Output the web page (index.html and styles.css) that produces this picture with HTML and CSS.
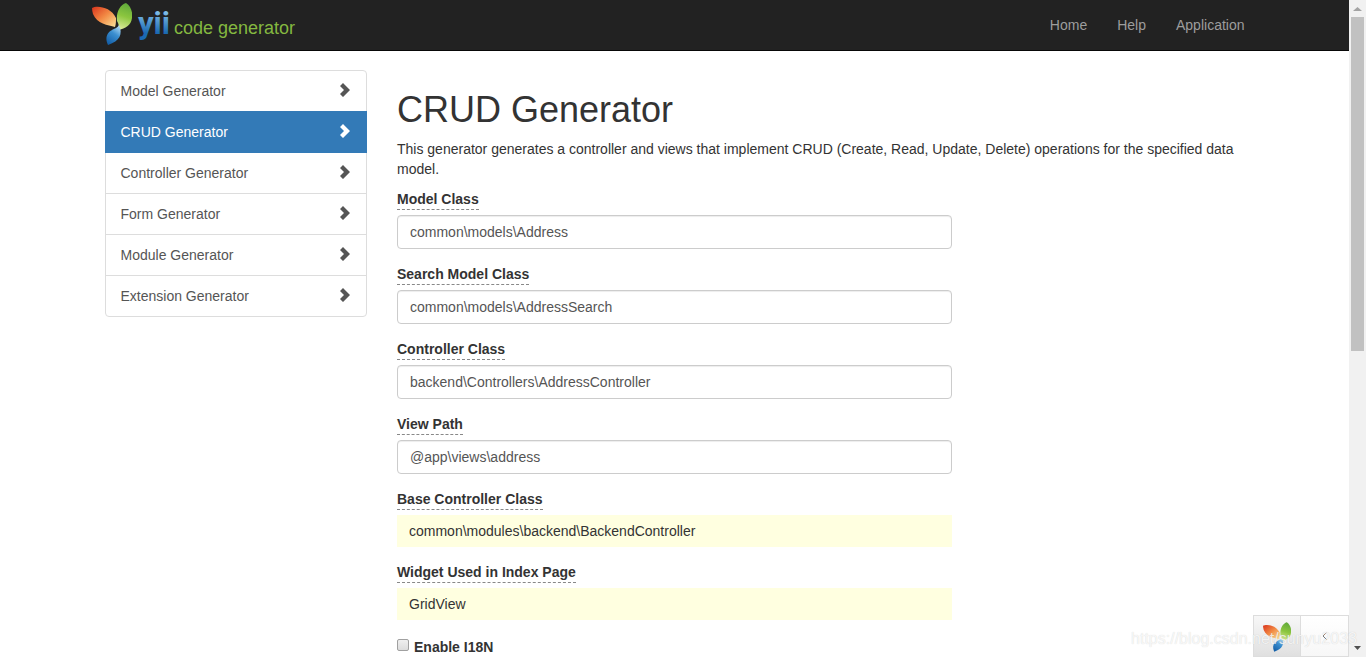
FILE: index.html
```
<!DOCTYPE html>
<html lang="en">
<head>
<meta charset="utf-8">
<title>CRUD Generator</title>
<link rel="stylesheet" href="styles.css">
</head>
<body>
<svg class="defs" aria-hidden="true">
  <defs>
    <linearGradient id="red" x1="0" y1="0" x2="1" y2="1"><stop offset="0" stop-color="#d9331c"/><stop offset=".5" stop-color="#f28b45"/><stop offset="1" stop-color="#fbe39a"/></linearGradient>
    <linearGradient id="green" x1=".6" y1="0" x2=".4" y2="1"><stop offset="0" stop-color="#5fa83a"/><stop offset=".5" stop-color="#8cc63f"/><stop offset="1" stop-color="#dcea9a"/></linearGradient>
    <linearGradient id="blue" x1=".8" y1="0" x2=".3" y2="1"><stop offset="0" stop-color="#b5dcf4"/><stop offset=".45" stop-color="#3b8fd0"/><stop offset="1" stop-color="#1560a8"/></linearGradient>
    <linearGradient id="word" x1="0" y1="0" x2="0" y2="1"><stop offset=".2" stop-color="#7dbbe8"/><stop offset=".75" stop-color="#1b6ab2"/></linearGradient>
    <symbol id="mark" viewBox="0 0 40 42">
      <path fill="url(#red)" d="M0 5C5 2 19 4 24 15C24 18 24 21 23 24C16 22 5 21 1 11Q0 7 0 5Z"/>
      <path fill="url(#green)" d="M34 0C39 3 41 10 40 15C39 23 33 25 27 27C27 24 27 21 25 18C24 9 28 2 34 0Z"/>
      <path fill="url(#blue)" d="M27 22C31 31 28 38 16 42C11 30 20 27 24 25Q26 24 27 22Z"/>
    </symbol>
    <symbol id="chevron" viewBox="0 0 14 14"><path fill="currentColor" d="M5 0L12 7L5 14L2 11L6 7L2 3Z"/></symbol>
  </defs>
</svg>
<div class="window">
  <div class="page">
    <header class="navbar">
      <div class="container navbar-inner">
        <a class="brand" href="#" aria-label="yii code generator">
          <svg class="brand-logo" viewBox="0 0 210 50">
            <use href="#mark" x="2" y="3" width="40" height="42"/>
            <text class="brand-yii" x="48" y="34" fill="url(#word)">yii</text>
            <text class="brand-name" x="84" y="34">code generator</text>
          </svg>
        </a>
        <nav class="nav">
          <a href="#">Home</a>
          <a href="#">Help</a>
          <a href="#">Application</a>
        </nav>
      </div>
    </header>
    <div class="container content">
      <nav class="list-group">
        <a href="#">Model Generator<svg><use href="#chevron"/></svg></a>
        <a class="active" href="#">CRUD Generator<svg><use href="#chevron"/></svg></a>
        <a href="#">Controller Generator<svg><use href="#chevron"/></svg></a>
        <a href="#">Form Generator<svg><use href="#chevron"/></svg></a>
        <a href="#">Module Generator<svg><use href="#chevron"/></svg></a>
        <a href="#">Extension Generator<svg><use href="#chevron"/></svg></a>
      </nav>
      <main class="generator">
        <h1>CRUD Generator</h1>
        <p>This generator generates a controller and views that implement CRUD (Create, Read, Update, Delete) operations for the specified data model.</p>
        <form class="fields">
          <div class="form-group">
            <label for="model">Model Class</label>
            <input id="model" class="form-control" type="text" value="common\models\Address">
          </div>
          <div class="form-group">
            <label for="search">Search Model Class</label>
            <input id="search" class="form-control" type="text" value="common\models\AddressSearch">
          </div>
          <div class="form-group">
            <label for="controller">Controller Class</label>
            <input id="controller" class="form-control" type="text" value="backend\Controllers\AddressController">
          </div>
          <div class="form-group">
            <label for="view">View Path</label>
            <input id="view" class="form-control" type="text" value="@app\views\address">
          </div>
          <div class="form-group">
            <label for="base">Base Controller Class</label>
            <output id="base" class="sticky-value">common\modules\backend\BackendController</output>
          </div>
          <div class="form-group">
            <label for="widget">Widget Used in Index Page</label>
            <output id="widget" class="sticky-value">GridView</output>
          </div>
          <div class="checkbox">
            <input id="i18n" type="checkbox">
            <label for="i18n">Enable I18N</label>
          </div>
        </form>
      </main>
    </div>
    <div class="debug-toolbar">
      <a href="#" aria-label="Debugger"><svg class="debug-mark"><use href="#mark"/></svg></a>
      <button type="button" aria-label="Expand toolbar"><svg class="debug-arrow" viewBox="0 0 6 10"><path d="M5 1L1 5L5 9"/></svg></button>
    </div>
  </div>
  <div class="scrollbar" aria-hidden="true">
    <svg viewBox="0 0 17 17"><path fill="#a3a3a3" d="M4 11L8.500 7L13 11Z"/></svg>
    <div class="thumb"></div>
    <svg class="down" viewBox="0 0 17 17"><path fill="#505050" d="M5 6L8.500 10L12 6Z"/></svg>
  </div>
  <div class="watermark">https://blog.csdn.net/sunyu2033</div>
</div>
</body>
</html>
```
FILE: styles.css
```
* { box-sizing: border-box; }
body {
  margin: 0;
  font: 14px/20px "Liberation Sans", Arial, sans-serif;
  color: #333;
  background: #fff;
}
a { text-decoration: none; }
.defs { position: absolute; width: 0; height: 0; }
.window {
  position: relative;
  display: grid;
  grid-template-columns: minmax(0, 1fr) 17px;
  height: 100vh;
  overflow: hidden;
}
.page { position: relative; overflow: hidden; }
.container { max-width: 1170px; margin: 0 auto; }

.navbar { background: #222; border-bottom: 1px solid #080808; }
.navbar-inner { display: flex; justify-content: space-between; }
.brand-logo { display: block; width: 210px; height: 50px; }
.brand-yii { font: bold 31px Roboto, "Liberation Sans", sans-serif; }
.brand-name { font: 18px "Liberation Sans", Arial, sans-serif; fill: #84b840; }
.nav { display: flex; }
.nav a { padding: 15px; color: #9d9d9d; }

.content {
  display: grid;
  grid-template-columns: minmax(0, 1fr) minmax(0, 3fr);
  margin-top: 19px;
}
.list-group { margin: 0 15px; }
.list-group a {
  display: flex;
  justify-content: space-between;
  padding: 10px 14px 10px 15px;
  margin-bottom: -1px;
  border: 1px solid #ddd;
  color: #555;
}
.list-group a:first-child { border-radius: 4px 4px 0 0; }
.list-group a:last-child { border-radius: 0 0 4px 4px; }
.list-group .active { position: relative; color: #fff; background: #337ab7; border-color: #337ab7; }
.list-group svg { width: 14px; height: 14px; margin-top: 2px; }

.generator { padding: 0 15px; }
h1 { margin: 20px 0 10px; font-size: 36px; font-weight: 500; line-height: 39px; }
p { margin: 0 0 10px; }
.fields { width: calc((100% + 30px) * 2 / 3 - 30px); }
.form-group { display: flex; flex-direction: column; align-items: flex-start; gap: 5px; margin-bottom: 15px; }
label { font-weight: bold; }
.form-group label { border-bottom: 1px dashed #888; }
.form-control {
  width: 100%;
  height: 34px;
  padding: 6px 12px;
  font: inherit;
  color: #555;
  background: #fff;
  border: 1px solid #ccc;
  border-radius: 4px;
  box-shadow: inset 0 1px 1px rgba(0, 0, 0, .075);
}
.sticky-value { width: 100%; padding: 6px 12px; background: #ffffe0; }
.checkbox { display: flex; gap: 5px; margin-top: 17px; }
.checkbox input {
  appearance: none;
  width: 12px;
  height: 12px;
  margin: 2px 0 0;
  border: 1px solid #a0a0a0;
  border-radius: 2px;
  background: linear-gradient(#efefef, #dcdcdc);
}

.debug-toolbar {
  position: absolute;
  right: 0;
  bottom: 0;
  display: flex;
  height: 42px;
  border: 1px solid #ddd;
}
.debug-toolbar a { display: flex; padding: 6px 9px; background: linear-gradient(#f7f7f7, #e0e0e0); }
.debug-mark { width: 28px; height: 30px; }
.debug-toolbar button {
  width: 48px;
  border: 0;
  border-left: 1px solid #ddd;
  padding: 0;
  background: linear-gradient(#fff, #f7f7f7);
}
.debug-arrow { width: 6px; height: 10px; fill: none; stroke: #777; }

.scrollbar { display: flex; flex-direction: column; background: #f1f1f1; }
.scrollbar svg { width: 17px; height: 17px; }
.thumb { height: 334px; margin: 0 2px; background: #c1c1c1; }
.down { margin-top: auto; }
.watermark {
  position: absolute;
  right: 9px;
  bottom: 8px;
  font-size: 16px;
  color: rgba(255, 255, 255, .8);
  text-shadow: 0 0 1px rgba(0, 0, 0, .18);
}
```
